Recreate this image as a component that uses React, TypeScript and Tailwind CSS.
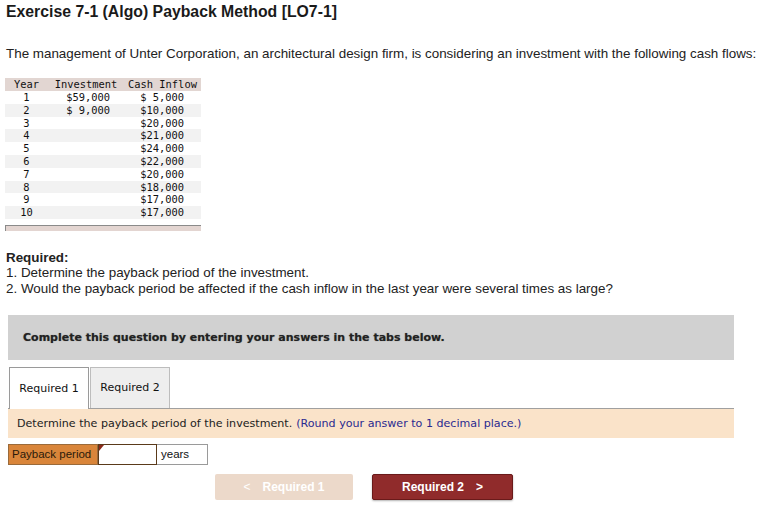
import React from "react";

const rows = [
  { year: "1", inv: "$59,000", cash: "$ 5,000" },
  { year: "2", inv: "$ 9,000", cash: "$10,000" },
  { year: "3", inv: "", cash: "$20,000" },
  { year: "4", inv: "", cash: "$21,000" },
  { year: "5", inv: "", cash: "$24,000" },
  { year: "6", inv: "", cash: "$22,000" },
  { year: "7", inv: "", cash: "$20,000" },
  { year: "8", inv: "", cash: "$18,000" },
  { year: "9", inv: "", cash: "$17,000" },
  { year: "10", inv: "", cash: "$17,000" },
];

const sans = "font-['Liberation_Sans',Arial,sans-serif]";
const verdana = "font-['DejaVu_Sans',Verdana,sans-serif]";

export default function App() {
  return (
    <div className={`w-[764px] h-[506px] bg-white overflow-hidden text-[#222] ${sans}`}>
      {/* Title */}
      <h1 className="pl-[6px] pt-[3px] text-[15.8px] leading-[18px] font-bold text-[#1a1a1a]">
        Exercise 7-1 (Algo) Payback Method [LO7-1]
      </h1>

      <p className="pl-[6px] mt-[25px] text-[13.4px] leading-[16px] whitespace-nowrap">
        The management of Unter Corporation, an architectural design firm, is considering an investment with the following cash flows:
      </p>

      {/* Cash flow table */}
      <div className="ml-[5px] mt-[16px] w-[196px] font-['DejaVu_Sans_Mono','Liberation_Mono',monospace] text-[10.4px] text-[#111]">
        <div className="grid grid-cols-[43px_76px_77px] h-[13px] leading-[13px] bg-[#e2d6d2]">
          <div className="text-center">Year</div>
          <div className="text-center">Investment</div>
          <div className="text-center">Cash Inflow</div>
        </div>
        {rows.map((r, i) => (
          <div
            key={r.year}
            className={`grid grid-cols-[43px_76px_77px] h-[12.8px] leading-[12.8px] ${i % 2 === 1 ? "bg-[#f2f2f2]" : "bg-white"}`}
          >
            <div className="text-center">{r.year}</div>
            <div className="text-right pr-[14px] whitespace-pre">{r.inv}</div>
            <div className="text-right pr-[17px] whitespace-pre">{r.cash}</div>
          </div>
        ))}
        <div className="mt-[6px] h-[6px] bg-[#e3d5d1] border-t border-l border-[#8a8a8a]" />
      </div>

      {/* Required */}
      <div className="pl-[6px] mt-[19px] text-[13.4px] leading-[15.5px]">
        <p className="font-bold">Required:</p>
        <p>1. Determine the payback period of the investment.</p>
        <p>2. Would the payback period be affected if the cash inflow in the last year were several times as large?</p>
      </div>

      {/* Instruction box */}
      <div className="ml-[8px] mt-[19px] w-[726px] h-[45px] bg-[#d1d1d1] flex items-center pl-[15px]">
        <p className={`${verdana} text-[11px] font-bold text-[#222] [text-shadow:0_0_1px_#777]`}>
          Complete this question by entering your answers in the tabs below.
        </p>
      </div>

      {/* Tabs */}
      <div className={`ml-[9px] mt-[7px] flex gap-[1px] h-[41px] ${verdana} text-[11px] text-[#111]`}>
        <div className="w-[80px] h-[42px] bg-white border border-b-0 border-[#9a9a9a] flex items-center justify-center relative z-10">
          Required 1
        </div>
        <div className="w-[80px] bg-[#eeeeee] border border-b-0 border-[#bdbdbd] flex items-center justify-center">
          Required 2
        </div>
      </div>

      <div className={`ml-[8px] w-[726px] h-[30px] bg-[#fae3c9] border-t border-[#a0a0a0] flex items-center pl-[9px] ${verdana} text-[11.1px]`}>
        <span className="text-[#222]">Determine the payback period of the investment.</span>
        <span className="ml-[4px] text-[#2a2a90]">(Round your answer to 1 decimal place.)</span>
      </div>

      {/* Answer row */}
      <div className="ml-[8px] mt-[6px] flex h-[21px] text-[11.5px]">
        <div className="w-[90px] bg-[#d9853a] border border-[#9a6a3a] flex items-center pl-[3px] text-[#2a1a0a]">
          Payback period
        </div>
        <div className="w-[59px] bg-white border border-[#5a3a1a] relative">
          <span className="absolute left-0 top-0 w-0 h-0 border-t-[6px] border-t-[#8a2a1a] border-r-[5px] border-r-transparent" />
        </div>
        <div className="w-[51px] bg-white border border-l-0 border-[#9a9a9a] flex items-center pl-[4px] text-[#111]">
          years
        </div>
      </div>

      {/* Nav buttons */}
      <div className="ml-[215px] mt-[9px] flex gap-[19px] h-[26px] text-[12px] font-bold text-white">
        <div className="w-[138px] bg-[#ecd9ca] rounded-[2px] flex items-center justify-center gap-[12px]">
          <span className="font-normal">&lt;</span>
          <span>Required 1</span>
        </div>
        <div className="w-[141px] bg-[#902b2b] rounded-[2px] border border-[#6a1a1a] flex items-center justify-center gap-[12px] shadow-[0_1px_2px_rgba(0,0,0,0.3)]">
          <span>Required 2</span>
          <span>&gt;</span>
        </div>
      </div>
    </div>
  );
}
